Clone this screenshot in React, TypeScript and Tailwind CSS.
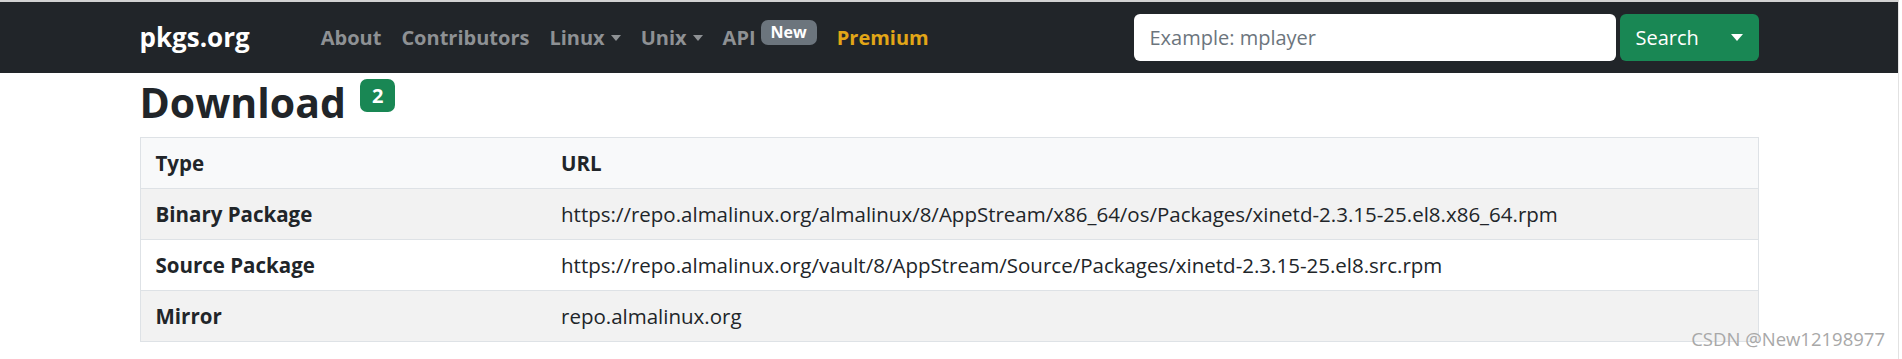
const rows = [
  {
    type: "Binary Package",
    url: "https://repo.almalinux.org/almalinux/8/AppStream/x86_64/os/Packages/xinetd-2.3.15-25.el8.x86_64.rpm",
  },
  {
    type: "Source Package",
    url: "https://repo.almalinux.org/vault/8/AppStream/Source/Packages/xinetd-2.3.15-25.el8.src.rpm",
  },
  { type: "Mirror", url: "repo.almalinux.org" },
];

const Caret = () => (
  <span className="ml-[6px] inline-block h-0 w-0 border-x-[5px] border-t-[6px] border-x-transparent border-t-current align-middle" />
);

const Navbar = () => (
  <nav className="h-[71px] w-full bg-[#212529]">
    <div className="mx-auto flex h-full w-[1619px] items-center">
      <a className="text-[26px] font-bold text-white">pkgs.org</a>
      <ul className="ml-[61px] flex items-center text-[20px] font-bold text-[#8e9194]">
        <li className="px-[10px]">About</li>
        <li className="px-[10px]">Contributors</li>
        <li className="flex items-center px-[10px]">
          Linux
          <Caret />
        </li>
        <li className="flex items-center px-[10px]">
          Unix
          <Caret />
        </li>
        <li className="flex items-start px-[10px]">
          API
          <span className="ml-[5px] -mt-[3px] rounded-[7px] bg-[#6c757d] px-[10px] py-[4px] text-[16px] leading-[17px] font-bold text-white">
            New
          </span>
        </li>
        <li className="px-[10px] text-[#e2a617]">Premium</li>
      </ul>
      <form className="ml-auto flex h-[47px] items-stretch gap-[4px]">
        <input
          className="w-[482px] rounded-[6px] bg-white px-[16px] text-[20px] text-[#212529] outline-none placeholder:text-[#6c757d]"
          placeholder="Example: mplayer"
        />
        <button
          type="button"
          className="flex w-[139px] items-center rounded-[6px] bg-[#198754] pl-[16px] pr-[16px] text-[20px] text-white"
        >
          Search
          <span className="ml-auto inline-block h-0 w-0 border-x-[6px] border-t-[7px] border-x-transparent border-t-white" />
        </button>
      </form>
    </div>
  </nav>
);

export default function App() {
  return (
    <div
      className="relative min-h-[359px] w-[1899px] border-r border-[#e2e2e2] border-t-2 border-t-[#d2d2d2] bg-white text-[#212529]"
      style={{ fontFamily: '"Open Sans", "Noto Sans", sans-serif' }}
    >
      <Navbar />
      <main className="mx-auto w-[1619px]">
        <div className="flex items-start gap-[14px] pt-[5px]">
          <h1 className="text-[41px] leading-[1.2] font-bold">Download</h1>
          <span className="mt-[1px] rounded-[7px] bg-[#198754] px-[12px] py-[5px] text-[20px] leading-[23px] font-bold text-white">
            2
          </span>
        </div>
        <table className="mt-[10px] w-full border-collapse border border-[#dee2e6] text-[20.5px]">
          <thead>
            <tr className="h-[51px] bg-[#f8f9fa] text-left">
              <th className="w-[406px] border-b border-[#dee2e6] px-[15px] font-bold">Type</th>
              <th className="border-b border-[#dee2e6] px-[15px] font-bold">URL</th>
            </tr>
          </thead>
          <tbody>
            {rows.map((r, i) => (
              <tr key={r.type} className={i % 2 === 0 ? "h-[51px] bg-[#f2f2f2]" : "h-[51px] bg-white"}>
                <td className="border-b border-[#dee2e6] px-[15px] font-bold">{r.type}</td>
                <td className="border-b border-[#dee2e6] px-[15px]">{r.url}</td>
              </tr>
            ))}
          </tbody>
        </table>
      </main>
      <span className="absolute right-[13px] bottom-[6px] text-[18.5px] text-[#a8a8a8]">CSDN @New12198977</span>
    </div>
  );
}
